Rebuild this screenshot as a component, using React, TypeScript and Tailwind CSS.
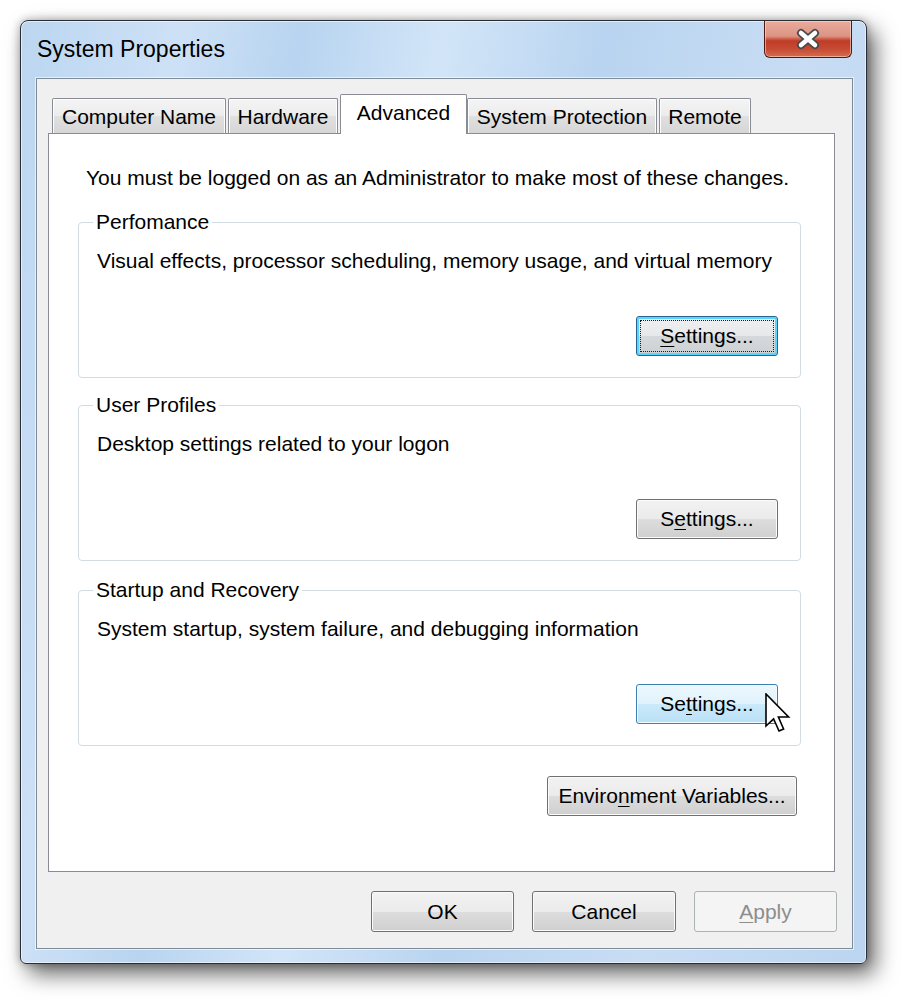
import type { ReactNode } from "react"

type Kind = "normal" | "focus" | "hover" | "disabled"

const btnStyles: Record<Kind, string> = {
  normal:
    "border-[#707070] text-black bg-[linear-gradient(#f2f2f2_0%,#ebebeb_50%,#dddddd_51%,#cfcfcf_100%)] shadow-[inset_0_0_0_1px_#fbfbfb]",
  focus:
    "border-[#2c628b] text-black bg-[linear-gradient(#eef0f2_0%,#e6e8ea_50%,#d6d9dc_51%,#cbd0d4_100%)] shadow-[inset_0_0_0_2px_#5ad6fd]",
  hover:
    "border-[#3c7fb1] text-black bg-[linear-gradient(#edf7fd_0%,#e0f2fc_50%,#cbeafb_51%,#b9e0f6_100%)] shadow-[inset_0_0_0_1px_#f4fbff]",
  disabled: "border-[#adb2b5] text-[#8d8d8d] bg-[#f4f4f4]",
}

function Mn({ children }: { children: ReactNode }) {
  return <span className="underline decoration-1 underline-offset-[3px]">{children}</span>
}

function WinButton({
  kind = "normal",
  className = "",
  children,
}: {
  kind?: Kind
  className?: string
  children: ReactNode
}) {
  return (
    <div className={`flex rounded-[3px] border p-[3px] ${btnStyles[kind]} ${className}`}>
      <div
        className={`flex flex-1 items-center justify-center border border-dotted ${
          kind === "focus" ? "border-[#1a1a1a]" : "border-transparent"
        }`}
      >
        {children}
      </div>
    </div>
  )
}

function Tab({ label, active = false, className = "" }: { label: string; active?: boolean; className?: string }) {
  if (active) {
    return (
      <div
        className={`relative z-10 -mb-px flex h-[40px] items-start justify-center rounded-t-[2px] border border-b-0 border-[#898c95] bg-white pt-[6px] ${className}`}
      >
        {label}
      </div>
    )
  }
  return (
    <div
      className={`flex h-[35px] items-start justify-center rounded-t-[2px] border border-b-0 border-[#898c95] bg-[linear-gradient(#f4f4f4_0%,#ececec_50%,#e0e0e0_51%,#d6d6d6_100%)] pt-[6px] shadow-[inset_1px_1px_0_#fdfdfd,inset_-1px_0_0_#fdfdfd] ${className}`}
    >
      {label}
    </div>
  )
}

function Group({
  title,
  text,
  button,
  className = "",
}: {
  title: string
  text: string
  button: ReactNode
  className?: string
}) {
  return (
    <fieldset className={`w-[723px] rounded-[4px] border border-[#d0dbe2] ${className}`}>
      <legend className="ml-[14px] px-[3px] leading-[24px]">{title}</legend>
      <div className="px-[18px] pt-[15px] pb-[21px]">
        <div className="leading-[24px]">{text}</div>
        <div className="mt-[43px] flex justify-end pr-[4px]">{button}</div>
      </div>
    </fieldset>
  )
}

function Cursor() {
  return (
    <svg
      className="absolute left-[129px] top-[9px]"
      width="26"
      height="40"
      viewBox="0 0 13 20"
    >
      <path
        d="M0.5 0.5 L0.5 16.5 L4.3 12.9 L7 19 L9.3 18 L6.7 12 L11.8 12 Z"
        fill="#ffffff"
        stroke="#000000"
        strokeWidth="0.8"
        strokeLinejoin="miter"
      />
    </svg>
  )
}

function CloseButton() {
  return (
    <div className="flex h-[37px] w-[88px] items-center justify-center rounded-b-[6px] border border-t-0 border-[#4f1a12] bg-[linear-gradient(#e9ab9d_0%,#dc9483_42%,#c03c26_55%,#c64b35_78%,#d66c4b_100%)] shadow-[inset_0_0_0_1px_rgba(255,225,215,0.55)]">
      <svg width="26" height="22" viewBox="0 0 26 22">
        <path d="M6 5 L20 17 M20 5 L6 17" stroke="#45484c" strokeWidth="8" strokeLinecap="round" />
        <path d="M6 5 L20 17 M20 5 L6 17" stroke="#ffffff" strokeWidth="4.6" strokeLinecap="round" />
      </svg>
    </div>
  )
}

export default function App() {
  return (
    <div className="h-[1000px] w-[904px] overflow-hidden bg-white pt-[20px] pl-[20px] font-['Liberation_Sans',Arial,sans-serif] text-[21px] text-black">
      <div className="flex h-[944px] w-[847px] flex-col rounded-t-[8px] rounded-b-[6px] border border-[#2a2e33] bg-[linear-gradient(100deg,#bcd6f1_0%,#cde1f6_16%,#b8d4f0_28%,#d2e5f8_42%,#b9d4f0_58%,#c8ddf4_78%,#bbd5f0_100%)] shadow-[inset_0_0_0_1px_rgba(255,255,255,0.55),0_0_8px_rgba(0,0,0,0.3),8px_10px_22px_rgba(0,0,0,0.6)]">
        <div className="flex h-[57px] justify-between pl-[16px] pr-[14px]">
          <div className="self-center pb-[1px] text-[23px] leading-[26px]">System Properties</div>
          <CloseButton />
        </div>

        <div className="ml-[15px] mr-[13px] flex h-[871px] flex-col border border-[#7f8b97] bg-[#f0f0f0] pt-[15px] pl-[11px] shadow-[0_0_0_1px_rgba(255,255,255,0.6)]">
          <div className="flex h-[39px] items-end pl-[4px] leading-[24px]">
            <Tab label="Computer Name" className="w-[174px]" />
            <Tab label="Hardware" className="ml-[2px] w-[110px]" />
            <Tab label="Advanced" active className="ml-[2px] w-[127px]" />
            <Tab label="System Protection" className="w-[190px]" />
            <Tab label="Remote" className="ml-[2px] w-[92px]" />
          </div>

          <div className="flex h-[739px] w-[787px] flex-col border border-[#898c95] bg-white pt-[32px] pl-[29px]">
            <div className="pl-[8px] leading-[24px]">
              You must be logged on as an Administrator to make most of these changes.
            </div>

            <Group
              className="mt-[20px]"
              title="Perfomance"
              text="Visual effects, processor scheduling, memory usage, and virtual memory"
              button={
                <WinButton kind="focus" className="h-[40px] w-[142px]">
                  <span>
                    <Mn>S</Mn>ettings...
                  </span>
                </WinButton>
              }
            />

            <Group
              className="mt-[15px]"
              title="User Profiles"
              text="Desktop settings related to your logon"
              button={
                <WinButton className="h-[40px] w-[142px]">
                  <span>
                    S<Mn>e</Mn>ttings...
                  </span>
                </WinButton>
              }
            />

            <Group
              className="mt-[17px]"
              title="Startup and Recovery"
              text="System startup, system failure, and debugging information"
              button={
                <div className="relative">
                  <WinButton kind="hover" className="h-[40px] w-[142px]">
                    <span>
                      Se<Mn>t</Mn>tings...
                    </span>
                  </WinButton>
                  <Cursor />
                </div>
              }
            />

            <div className="mt-[30px] flex w-[723px] justify-end pr-[4px]">
              <WinButton className="h-[40px] w-[250px]">
                <span>
                  Enviro<Mn>n</Mn>ment Variables...
                </span>
              </WinButton>
            </div>
          </div>

          <div className="mt-[19px] flex justify-end gap-[18px] pr-[15px]">
            <WinButton className="h-[41px] w-[143px]">OK</WinButton>
            <WinButton className="h-[41px] w-[144px]">Cancel</WinButton>
            <WinButton kind="disabled" className="h-[41px] w-[143px]">
              <span>
                <Mn>A</Mn>pply
              </span>
            </WinButton>
          </div>
        </div>
      </div>
    </div>
  )
}
